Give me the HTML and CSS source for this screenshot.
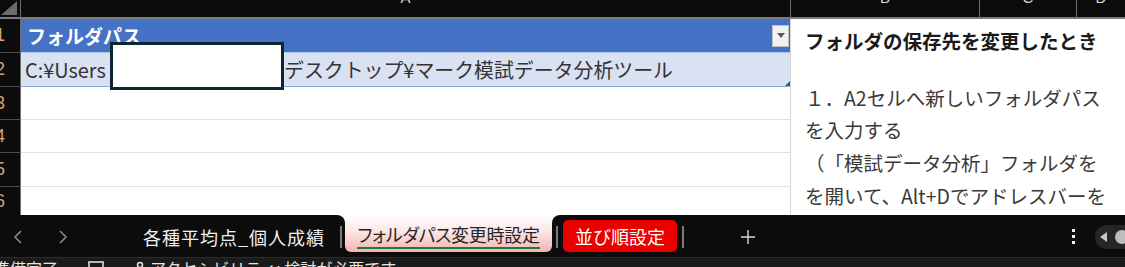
FILE: index.html
```html
<!DOCTYPE html>
<html lang="ja">
<head>
<meta charset="utf-8">
<title>Excel</title>
<link rel="stylesheet" href="styles.css">
</head>
<body>
<div class="app">
  <div class="colhdr">
    <div class="corner">
      <svg width="18" height="16" viewBox="0 0 18 16"><polygon points="1,15 17,15 17,1" fill="#6b6b6b"/></svg>
    </div>
    <div class="ch ch-a"><span>A</span></div>
    <div class="ch ch-b"><span>B</span></div>
    <div class="ch ch-c"><span>C</span></div>
    <div class="ch ch-d"><span>D</span></div>
  </div>

  <div class="sheet">
    <div class="rowhdr">
      <div class="rh h34"><span>1</span></div>
      <div class="rh h34"><span>2</span></div>
      <div class="rh h33"><span>3</span></div>
      <div class="rh h33"><span>4</span></div>
      <div class="rh h34"><span>5</span></div>
      <div class="rh hrest"><span>6</span></div>
    </div>
    <div class="cola">
      <div class="row row-head h34">
        <span class="head-text">フォルダパス</span>
        <span class="dd"><svg width="8" height="5" viewBox="0 0 8 5"><polygon points="0,0 8,0 4,5" fill="#595959"/></svg></span>
      </div>
      <div class="row row-data h34">
        <span class="path-user">C:¥Users</span><span class="path-rest">デスクトップ¥マーク模試データ分析ツール</span>
        <span class="handle"></span>
      </div>
      <div class="row row-empty h33"></div>
      <div class="row row-empty h33"></div>
      <div class="row row-empty h34"></div>
      <div class="row hrest"></div>
    </div>
    <div class="notes">
      <p class="n-title">フォルダの保存先を変更したとき</p>
      <p>１．A2セルへ新しいフォルダパス</p>
      <p>を入力する</p>
      <p>（「模試データ分析」フォルダを</p>
      <p>を開いて、Alt+Dでアドレスバーを</p>
    </div>
    <div class="redact"></div>
  </div>

  <div class="tabbar">
    <div class="tabrow">
      <div class="seg-left">
        <svg class="chev" width="10" height="14" viewBox="0 0 10 14"><path d="M8 1 L2 7 L8 13" fill="none" stroke="#8a8a8a" stroke-width="1.6"/></svg>
        <svg class="chev chev2" width="10" height="14" viewBox="0 0 10 14"><path d="M2 1 L8 7 L2 13" fill="none" stroke="#8a8a8a" stroke-width="1.6"/></svg>
        <span class="tab-label">各種平均点_個人成績</span>
        <span class="sep"></span>
      </div>
      <div class="tab-active-wrap">
        <div class="tab-active">
          <span class="active-label">フォルダパス変更時設定</span>
        </div>
      </div>
      <div class="seg-right">
        <span class="sep"></span>
        <span class="tab-red">並び順設定</span>
        <span class="sep"></span>
        <svg class="plus" width="14" height="14" viewBox="0 0 14 14"><path d="M7 0 V14 M0 7 H14" stroke="#d8d8d8" stroke-width="1.4"/></svg>
        <span class="kebab"><i></i><i></i><i></i></span>
        <span class="pill">
          <svg width="30" height="24" viewBox="0 0 30 24"><polygon points="5,12 12,7 12,17" fill="#c8c8c8"/><circle cx="27" cy="12" r="7" fill="#bdbdbd"/></svg>
        </span>
      </div>
    </div>
  </div>

  <div class="status">
    <span class="st-ready">準備完了</span>
    <svg class="st-icon" width="16" height="14" viewBox="0 0 16 14"><rect x="1" y="1" width="14" height="12" fill="none" stroke="#e6e6e6" stroke-width="1.5"/></svg>
    <svg class="st-icon2" width="12" height="14" viewBox="0 0 12 14"><circle cx="6" cy="4" r="2.5" fill="none" stroke="#e6e6e6" stroke-width="1.5"/><path d="M1 8 H11" stroke="#e6e6e6" stroke-width="1.5"/></svg>
    <span class="st-text">アクセシビリティ: 検討が必要です</span>
  </div>
</div>
</body>
</html>
```

FILE: styles.css
```css
* { box-sizing: border-box; margin: 0; padding: 0; }
html, body {
  width: 1125px;
  height: 267px;
  overflow: hidden;
  background: #0c0c0c;
}
body {
  font-family: "Noto Sans CJK JP", "Noto Sans", sans-serif;
}
.app {
  display: flex;
  flex-direction: column;
  height: 267px;
}

/* column header */
.colhdr {
  display: flex;
  height: 19px;
  border-bottom: 2px solid #7b7b7b;
  background: #0c0c0c;
  overflow: hidden;
}
.corner {
  width: 21px;
  border-right: 1px solid #6e6e6e;
  display: flex;
  align-items: flex-start;
}
.ch {
  display: flex;
  justify-content: center;
  border-right: 1px solid #6e6e6e;
  color: #d6d6d6;
  font: 15px/16px "Liberation Sans", sans-serif;
  overflow: hidden;
}
.ch span { margin-top: -10px; }
.ch-a { width: 770px; }
.ch-b { width: 189px; }
.ch-c { width: 97px; }
.ch-d { flex: 1; border-right: 0; }

/* sheet */
.sheet {
  display: flex;
  height: 196px;
  position: relative;
  background: #fff;
}
.h34 { height: 34px; flex: none; }
.h33 { height: 33px; flex: none; }
.hrest { flex: 1; }

.rowhdr {
  width: 21px;
  background: #0c0c0c;
  border-right: 1px solid #6e6e6e;
  display: flex;
  flex-direction: column;
}
.rh {
  display: flex;
  justify-content: flex-end;
  align-items: center;
  padding-right: 15px;
  border-bottom: 1px solid #4d4d4d;
  color: #d2a27a;
  font: 18px "Liberation Sans", sans-serif;
  overflow: hidden;
}
.rh.hrest { border-bottom: 0; }

.cola {
  width: 769px;
  display: flex;
  flex-direction: column;
}
.row {
  display: flex;
  align-items: center;
  white-space: nowrap;
}
.row-head {
  background: #4472c4;
  border-bottom: 1px solid #b4c6e7;
  padding-left: 6px;
  padding-right: 1px;
}
.head-text {
  color: #fff;
  font-weight: 700;
  font-size: 19px;
}
.dd {
  margin-left: auto;
  width: 17px;
  height: 22px;
  background: #f2f2f2;
  border: 1px solid #bfbfbf;
  display: flex;
  align-items: center;
  justify-content: center;
}
.row-data {
  background: #d9e1f2;
  border-bottom: 1px solid #8ea9db;
  padding-left: 4px;
  color: #333;
  font-size: 19.9px;
  position: relative;
}
.path-user {
  display: inline-block;
  width: 259px;
}
.handle {
  position: absolute;
  right: 0;
  bottom: 0;
  width: 0;
  height: 0;
  border-left: 5px solid transparent;
  border-bottom: 5px solid #2f5597;
}
.row-empty {
  border-bottom: 1px solid #e1e1e1;
}

.notes {
  flex: 1;
  border-left: 1px solid #d4d4d4;
  padding: 6px 0 0 14px;
  font-size: 19.5px;
  line-height: 32.7px;
  color: #3a3a3a;
  white-space: nowrap;
  overflow: hidden;
  text-spacing-trim: space-all;
}
.n-title {
  font-weight: 700;
  color: #1a1a1a;
  margin-bottom: 24px;
}

.redact {
  position: absolute;
  left: 110px;
  top: 23px;
  width: 174px;
  height: 48px;
  border: 3px solid #0d2631;
  background: #fff;
}

/* tabs */
.tabbar {
  height: 42px;
  background: #0c0c0c;
}
.tabrow {
  display: flex;
  height: 37px;
  background: #fff;
}
.seg-left {
  width: 345px;
  background: #0c0c0c;
  border-top-right-radius: 8px;
  display: flex;
  align-items: center;
  padding: 6px 3px 0 13px;
}
.chev2 { margin-left: 35px; }
.tab-label {
  margin-left: auto;
  margin-right: 15px;
  color: #f0f0f0;
  font-size: 18px;
  letter-spacing: 1px;
  white-space: nowrap;
}
.sep {
  width: 2px;
  height: 22px;
  background: #7a7a7a;
  flex: none;
}
.tab-active-wrap {
  width: 207px;
  background: linear-gradient(#fff 50%, #0c0c0c 50%);
}
.tab-active {
  height: 100%;
  border-radius: 0 0 6px 6px;
  background: linear-gradient(#ffffff 0%, #fce6e6 45%, #f4b2b2 100%);
  display: flex;
  flex-direction: column;
  align-items: center;
  padding-top: 6px;
}
.active-label {
  color: #262626;
  font-size: 18px;
  line-height: 26px;
  font-feature-settings: "palt";
  letter-spacing: -0.3px;
  border-bottom: 2px solid #1e7b34;
  white-space: nowrap;
}
.seg-right {
  flex: 1;
  background: #0c0c0c;
  border-top-left-radius: 8px;
  display: flex;
  align-items: center;
  padding: 6px 0 0 4px;
  overflow: hidden;
}
.tab-red {
  margin: 0 5px;
  width: 114px;
  height: 32px;
  align-self: flex-end;
  background: #eb0000;
  border-radius: 5px;
  color: #fff;
  font-size: 18px;
  display: flex;
  align-items: center;
  justify-content: center;
  white-space: nowrap;
}
.plus { margin-left: 57px; }
.kebab {
  margin-left: auto;
  display: flex;
  flex-direction: column;
  gap: 3px;
}
.kebab i {
  display: block;
  width: 3px;
  height: 3px;
  background: #f0f0f0;
}
.pill {
  margin-left: 20px;
  width: 30px;
  height: 24px;
  background: #262626;
  border-radius: 12px 0 0 12px;
  display: flex;
}

/* status bar */
.status {
  height: 10px;
  background: #1b1b1b;
  border-top: 1px solid #2c2c2c;
  display: flex;
  align-items: flex-start;
  color: #e6e6e6;
  font-size: 16px;
  line-height: 20px;
  white-space: nowrap;
  overflow: hidden;
}
.st-ready { margin-left: -6px; }
.st-icon { margin: 3px 0 0 30px; flex: none; }
.st-icon2 { margin: 3px 0 0 30px; flex: none; }
.st-text { margin-left: 4px; }
```
